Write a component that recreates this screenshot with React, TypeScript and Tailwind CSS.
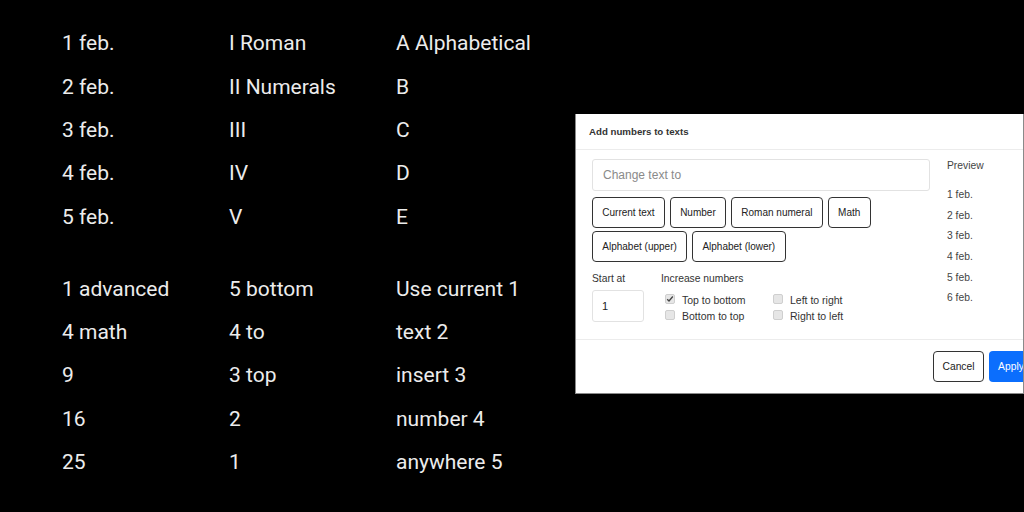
import React from "react";

const col1 = ["1 feb.", "2 feb.", "3 feb.", "4 feb.", "5 feb."];
const col2 = ["I Roman", "II Numerals", "III", "IV", "V"];
const col3 = ["A Alphabetical", "B", "C", "D", "E"];
const col4 = ["1 advanced", "4 math", "9", "16", "25"];
const col5 = ["5 bottom", "4 to", "3 top", "2", "1"];
const col6 = ["Use current 1", "text 2", "insert 3", "number 4", "anywhere 5"];

function Col({ items }: { items: string[] }) {
  return (
    <div className="flex flex-col w-[167px]">
      {items.map((t, i) => (
        <div key={i} className="h-[43.33px] flex items-center whitespace-nowrap">
          {t}
        </div>
      ))}
    </div>
  );
}

function Box({ checked }: { checked?: boolean }) {
  return (
    <span className="w-[10px] h-[10px] mb-[3px] rounded-[2px] bg-[#e6e6e6] border border-[#cfcfcf] flex items-center justify-center shrink-0">
      {checked && (
        <svg width="8" height="8" viewBox="0 0 8 8">
          <path d="M1.2 4.2 L3 6 L6.8 1.5" fill="none" stroke="#444" strokeWidth="1.3" />
        </svg>
      )}
    </span>
  );
}

function Btn({ children }: { children: React.ReactNode }) {
  return (
    <div className="h-[31px] px-[9.3px] border border-[#333] rounded-[4px] flex items-center text-[10px] text-[#222] whitespace-nowrap">
      {children}
    </div>
  );
}

function Check({ label, checked }: { label: string; checked?: boolean }) {
  return (
    <div className="h-[16px] flex items-center gap-[7px]">
      <Box checked={checked} />
      <span className="leading-[12px]">{label}</span>
    </div>
  );
}

export default function App() {
  return (
    <div className="w-[1024px] h-[512px] bg-black flex overflow-hidden">
      <div
        className="w-[575px] shrink-0 pl-[62px] pt-[22.5px] text-[21px] text-[#ececec]"
        style={{ fontFamily: "Roboto, sans-serif" }}
      >
        <div className="flex">
          <Col items={col1} />
          <Col items={col2} />
          <Col items={col3} />
        </div>
        <div className="flex mt-[28.5px]">
          <Col items={col4} />
          <Col items={col5} />
          <Col items={col6} />
        </div>
      </div>
      <div
        className="mt-[114px] w-[449px] h-[280px] bg-white border-l border-b border-r border-[#8a8a8a] overflow-hidden shrink-0 text-[#333]"
        style={{ fontFamily: '"Liberation Sans", Arial, sans-serif' }}
      >
        <div className="w-[470px]">
          <div className="h-[36px] border-b border-[#ececec] pl-[13px] pt-[2px] flex items-center text-[9.7px] font-bold text-[#333]">
            Add numbers to texts
          </div>
          <div className="h-[190px] flex border-b border-[#ececec]">
            <div className="w-[354px] pl-[16px] pt-[9px]">
              <div className="w-[338px] h-[32px] border border-[#e2e2e2] rounded-[3px] flex items-center pl-[10px] text-[12px] text-[#8a8a8a]">
                Change text to
              </div>
              <div className="flex gap-[5px] mt-[6px]">
                <Btn>Current text</Btn>
                <Btn>Number</Btn>
                <Btn>Roman numeral</Btn>
                <Btn>Math</Btn>
              </div>
              <div className="flex gap-[5px] mt-[3px]">
                <Btn>Alphabet (upper)</Btn>
                <Btn>Alphabet (lower)</Btn>
              </div>
              <div className="flex mt-[11px]">
                <div className="w-[69px]">
                  <div className="text-[10.3px] leading-[12px] text-[#333]">Start at</div>
                  <div className="mt-[5px] w-[52px] h-[32px] border border-[#e2e2e2] rounded-[3px] flex items-center pl-[9px] text-[11px] text-[#222]">
                    1
                  </div>
                </div>
                <div>
                  <div className="text-[10.3px] leading-[12px] text-[#333]">Increase numbers</div>
                  <div className="flex mt-[7px] text-[10.5px] text-[#333]">
                    <div className="w-[112px] pl-[4px] flex flex-col">
                      <Check label="Top to bottom" checked />
                      <Check label="Bottom to top" />
                    </div>
                    <div className="flex flex-col">
                      <Check label="Left to right" />
                      <Check label="Right to left" />
                    </div>
                  </div>
                </div>
              </div>
            </div>
            <div className="pl-[17px] pt-[10px] text-[10.3px] text-[#444]">
              <div className="leading-[12px]">Preview</div>
              <div className="mt-[17px] flex flex-col">
                {["1 feb.", "2 feb.", "3 feb.", "4 feb.", "5 feb.", "6 feb."].map((t) => (
                  <div key={t} className="h-[20.7px] leading-[12px]">
                    {t}
                  </div>
                ))}
              </div>
            </div>
          </div>
          <div className="h-[53px] flex items-center pl-[357px] gap-[5px]">
            <div className="h-[31px] w-[51px] border border-[#333] rounded-[4px] flex items-center justify-center text-[10.3px] text-[#222]">
              Cancel
            </div>
            <div className="h-[31px] w-[44px] rounded-[4px] bg-[#0b6efd] flex items-center justify-center text-[10.3px] text-white">
              Apply
            </div>
          </div>
        </div>
      </div>
    </div>
  );
}
